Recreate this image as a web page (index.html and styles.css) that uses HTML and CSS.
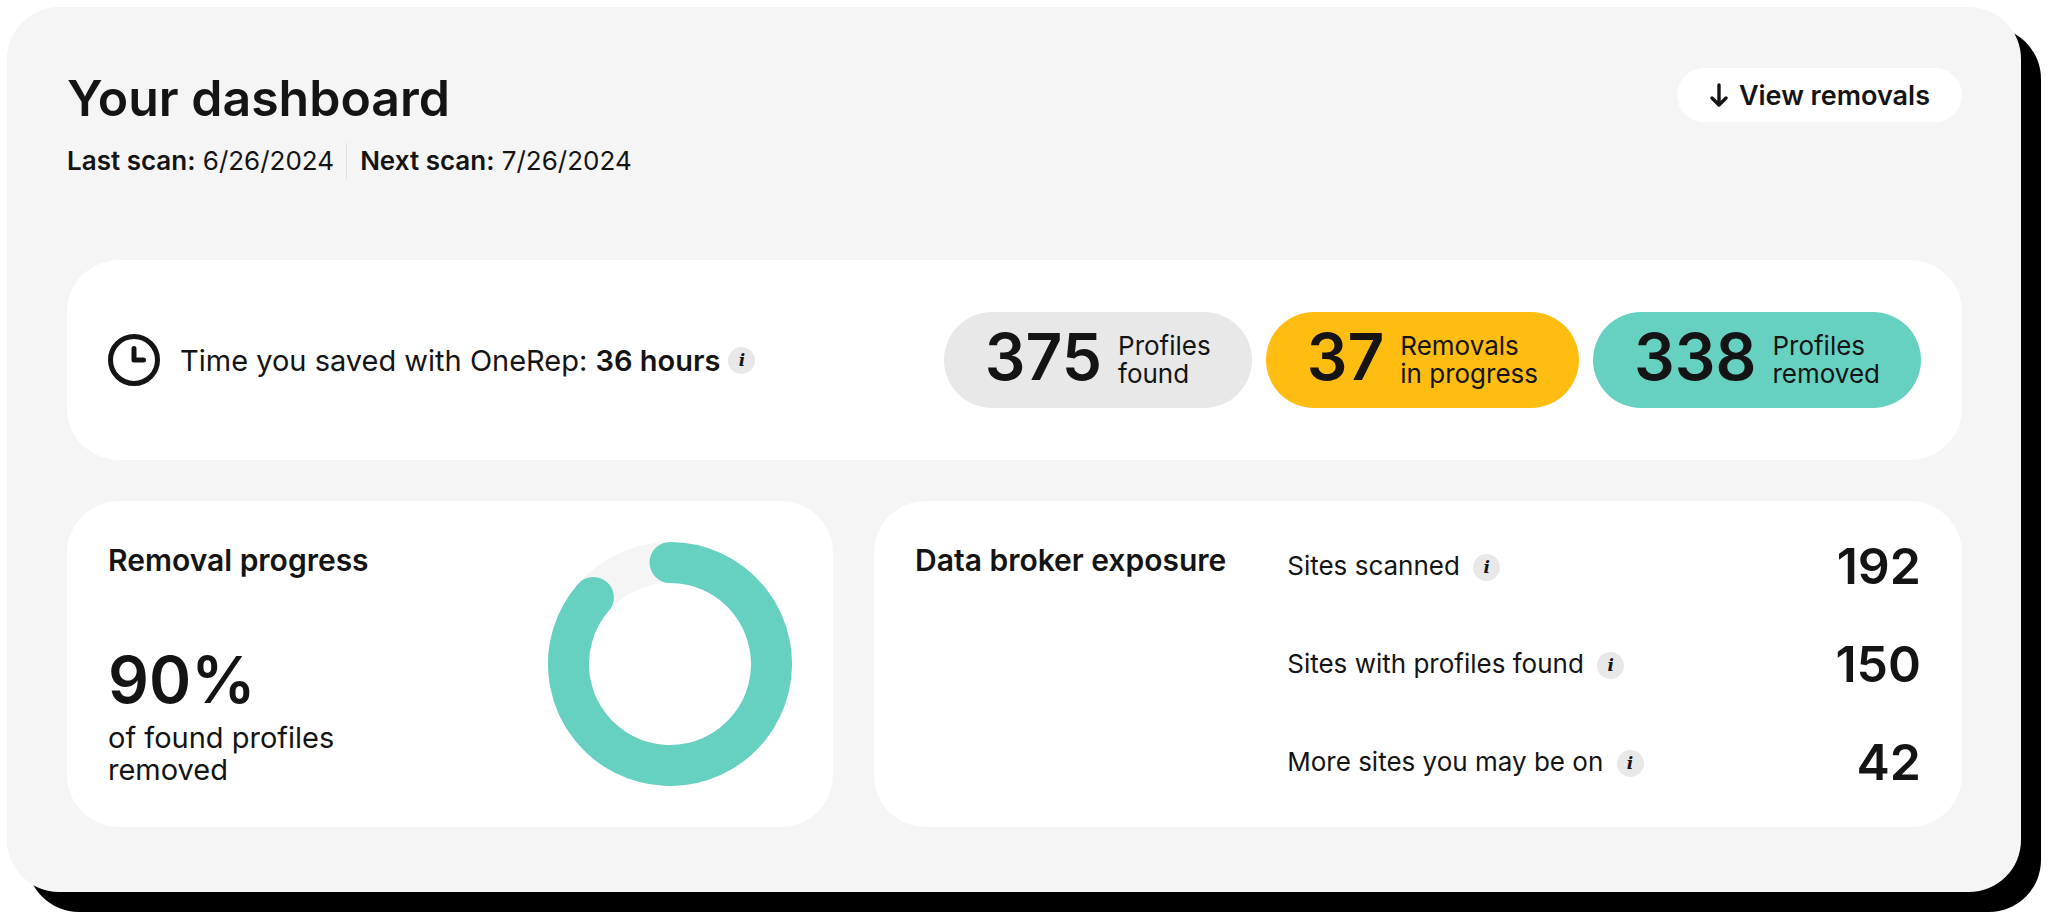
FILE: index.html
```html
<!DOCTYPE html>
<html lang="en">
<head>
    <meta charset="UTF-8">
    <meta name="viewport" content="width=device-width, initial-scale=1.0">
    <title>Your dashboard</title>
    <link rel="stylesheet" href="styles.css">
</head>
<body>
    <main class="dashboard">
        <header class="header">
            <div>
                <h1>Your dashboard</h1>
                <div class="scans">
                    <span><b>Last scan:</b> 6/26/2024</span>
                    <span class="next-scan"><b>Next scan:</b> 7/26/2024</span>
                </div>
            </div>
            <button type="button" class="view-button">
                <svg width="20" height="24" viewBox="0 0 20 24" fill="none" stroke="currentColor" stroke-width="3.4" stroke-linecap="round" stroke-linejoin="round">
                    <path d="M10 2v20M3 15l7 7 7-7"/>
                </svg>
                View removals
            </button>
        </header>

        <section class="card summary">
            <div class="time-saved">
                <svg class="clock" width="52" height="52" viewBox="0 0 52 52" fill="none" stroke="currentColor" stroke-width="5" stroke-linecap="round" stroke-linejoin="round">
                    <circle cx="26" cy="26" r="23.5"/>
                    <path d="M26 14.5V26h9.5"/>
                </svg>
                <span>Time you saved with OneRep: <b>36 hours</b></span>
                <button type="button" class="info" aria-label="About time saved">i</button>
            </div>
            <div class="pills">
                <div class="pill found">
                    <strong>375</strong>
                    <span>Profiles<br>found</span>
                </div>
                <div class="pill in-progress">
                    <strong>37</strong>
                    <span>Removals<br>in progress</span>
                </div>
                <div class="pill removed">
                    <strong>338</strong>
                    <span>Profiles<br>removed</span>
                </div>
            </div>
        </section>

        <div class="row">
            <section class="card progress">
                <div class="progress-text">
                    <h2>Removal progress</h2>
                    <div>
                        <strong class="percent">90%</strong>
                        <p>of found profiles<br>removed</p>
                    </div>
                </div>
                <svg class="donut" width="244" height="244" viewBox="0 0 244 244" fill="none" stroke-width="41">
                    <circle cx="122" cy="122" r="101.5" stroke="#f5f5f5"/>
                    <path d="M122 20.5A101.5 101.5 0 1 1 45.4 55.4" stroke="#66d1c1" stroke-linecap="round"/>
                </svg>
            </section>

            <section class="card exposure">
                <h2>Data broker exposure</h2>
                <table class="sites">
                    <tr>
                        <th scope="row">Sites scanned <button type="button" class="info" aria-label="About sites scanned">i</button></th>
                        <td>192</td>
                    </tr>
                    <tr>
                        <th scope="row">Sites with profiles found <button type="button" class="info" aria-label="About sites with profiles found">i</button></th>
                        <td>150</td>
                    </tr>
                    <tr>
                        <th scope="row">More sites you may be on <button type="button" class="info" aria-label="About more sites">i</button></th>
                        <td>42</td>
                    </tr>
                </table>
            </section>
        </div>
    </main>
</body>
</html>
```
FILE: styles.css
```css
* {
    box-sizing: border-box;
}

body {
    margin: 0;
    padding: 7px 27px 27px 7px;
    background-color: #fff;
    color: #141414;
    font-family: Inter, "Liberation Sans", sans-serif;
    font-size: 26px;
}

h1, h2, p {
    margin: 0;
}

b, strong {
    font-weight: 600;
}

button {
    border: none;
    color: inherit;
    font-family: inherit;
    cursor: pointer;
}

.dashboard {
    padding: 61px 59px 65px 60px;
    border-radius: 52px;
    background-color: #f5f5f5;
    box-shadow: 20px 20px 0 #000;
}

.header {
    display: flex;
    justify-content: space-between;
    align-items: flex-start;
    margin-bottom: 81px;
}

h1 {
    font-size: 50px;
    font-weight: 600;
    line-height: 60px;
}

.scans {
    display: flex;
    gap: 12px;
    margin-top: 15px;
    line-height: 36px;
}

.next-scan {
    padding-left: 13px;
    border-left: 1px solid #e0e0e0;
}

.view-button {
    display: flex;
    align-items: center;
    gap: 10px;
    height: 54px;
    padding: 0 32px;
    border-radius: 27px;
    background-color: #fff;
    font-size: 27px;
    font-weight: 600;
}

.card {
    border-radius: 52px;
    background-color: #fff;
}

.summary {
    display: flex;
    justify-content: space-between;
    align-items: center;
    padding: 52px 41px;
}

.time-saved {
    display: flex;
    align-items: center;
    font-size: 29px;
}

.clock {
    margin-right: 20px;
}

.info {
    width: 27px;
    height: 27px;
    margin-left: 8px;
    padding: 0;
    border-radius: 50%;
    background-color: #e8e8e8;
    font: italic bold 17px/27px "DejaVu Serif", serif;
    vertical-align: middle;
}

.pills {
    display: flex;
    gap: 14px;
}

.pill {
    display: flex;
    align-items: center;
    gap: 16px;
    height: 96px;
    padding: 0 41px;
    border-radius: 48px;
    font-size: 26px;
    line-height: 28px;
}

.pill strong, .percent {
    font-size: 64px;
}

.pill strong {
    padding-bottom: 6px;
}

.found {
    background-color: #e8e8e8;
}

.in-progress {
    background-color: #ffbd12;
}

.removed {
    background-color: #66d1c1;
}

.row {
    display: grid;
    grid-template-columns: 766fr 1088fr;
    gap: 41px;
    margin-top: 41px;
}

.row .card {
    display: flex;
    justify-content: space-between;
    padding: 41px;
}

h2 {
    font-size: 30px;
    font-weight: 600;
    line-height: 36px;
}

.progress-text {
    display: flex;
    flex-direction: column;
    justify-content: space-between;
    font-size: 29px;
    line-height: 32px;
}

.percent {
    display: block;
    margin-bottom: 10px;
    line-height: 64px;
}

.sites {
    width: 63%;
    height: 244px;
    border-collapse: collapse;
}

.sites th, .sites td {
    padding: 0;
    line-height: 48px;
}

/* first and last rows sit against the edges of the card */
.sites tr:first-child > * {
    vertical-align: top;
}

.sites tr:last-child > * {
    vertical-align: bottom;
}

.sites th {
    font-weight: 400;
    text-align: left;
}

.sites td {
    font-size: 50px;
    font-weight: 600;
    text-align: right;
}

.sites .info {
    margin-left: 6px;
}
```
